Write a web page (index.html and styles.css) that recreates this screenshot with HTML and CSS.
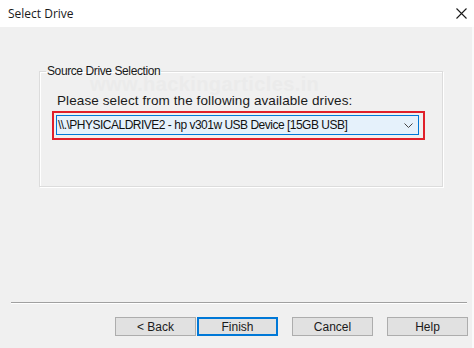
FILE: index.html
```html
<!DOCTYPE html>
<html>
<head>
<meta charset="utf-8">
<link rel="stylesheet" href="styles.css">
</head>
<body>
<div class="window">
  <div class="titlebar">
    <span class="title">Select Drive</span>
    <svg class="close" width="11" height="11" viewBox="0 0 11 11"><path d="M0.5 0.5 L10.5 10.5 M10.5 0.5 L0.5 10.5" stroke="#1a1a1a" stroke-width="1.1" fill="none"/></svg>
  </div>
  <div class="content">
    <fieldset class="group">
      <legend class="legend">Source Drive Selection</legend>
      <div class="watermark">www.hackingarticles.in</div>
      <div class="prompt">Please select from the following available drives:</div>
      <div class="highlight">
        <div class="select">
          <span class="select-text">\\.\PHYSICALDRIVE2 - hp v301w USB Device [15GB USB]</span>
          <svg class="chev" width="9" height="5" viewBox="0 0 9 5"><path d="M0.5 0.5 L4.5 4.5 L8.5 0.5" stroke="#444" stroke-width="1" fill="none"/></svg>
        </div>
      </div>
    </fieldset>
  </div>
  <div class="footer">
    <div class="separator"></div>
    <div class="buttons">
      <button class="btn btn-back">&lt; Back</button>
      <button class="btn btn-default">Finish</button>
      <button class="btn">Cancel</button>
      <button class="btn">Help</button>
    </div>
  </div>
</div>
</body>
</html>
```
FILE: styles.css
```css
* { box-sizing: border-box; }
html, body { margin: 0; padding: 0; }
body { width: 474px; height: 348px; overflow: hidden; background: #f0f0f0; font-family: "Liberation Sans", Arial, sans-serif; }
.window { width: 474px; height: 348px; display: flex; flex-direction: column; background: #f0f0f0; box-shadow: inset -2px 0 0 #fafafa; }
.titlebar { height: 27px; background: #ffffff; display: flex; align-items: center; justify-content: space-between; padding: 0 7px 0 8px; }
.title { font-family: "Open Sans", "Noto Sans", sans-serif; font-size: 12px; color: #1a1a1a; }
.close { display: block; }
.content { flex: 1; padding: 37px 31px 0 39px; }
.group { position: relative; margin: 0; min-width: 0; height: 123px; padding: 0 0 0 6px; border: 1px solid #dcdcdc; box-shadow: inset 1px 1px 0 #ffffff, 1px 1px 0 #ffffff; }
.legend { padding: 0 1px; font-size: 12px; letter-spacing: -0.4px; color: #1a1a1a; line-height: 15px; }
.watermark { position: absolute; left: 50px; top: -3px; font-size: 20px; line-height: 16px; font-weight: bold; color: #ebebeb; letter-spacing: 0.4px; }
.prompt { margin: 14px 0 0 11px; font-size: 13.5px; letter-spacing: 0.1px; line-height: 16px; color: #1a1a1a; }
.highlight { margin: 2px 0 0 6px; width: 373px; border: 2px solid #e0202a; padding: 2px 4px 3px 2px; }
.select { height: 20px; background: #e5f1fb; border: 1px solid #0078d7; display: flex; align-items: center; justify-content: space-between; padding: 0 5px 0 1px; }
.select-text { font-size: 12px; letter-spacing: -0.5px; color: #111; white-space: nowrap; }
.chev { display: block; }
.footer { height: 46px; display: flex; flex-direction: column; }
.separator { margin: 0 7px 0 11px; height: 2px; border-top: 1px solid #a0a0a0; border-bottom: 1px solid #ffffff; }
.buttons { display: flex; justify-content: flex-end; gap: 14px; padding-right: 6px; margin-top: 13px; }
.btn { width: 81px; height: 19px; padding: 0; background: #e1e1e1; border: 1px solid #adadad; font-family: "Liberation Sans", Arial, sans-serif; font-size: 12px; color: #1a1a1a; }
.btn-back { margin-right: -13px; }
.btn-default { border: 2px solid #0078d7; }
```
